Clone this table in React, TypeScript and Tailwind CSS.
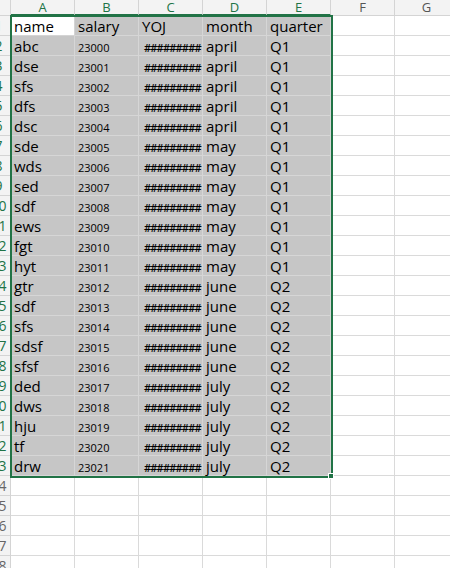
import React from "react";

const cols = ["A", "B", "C", "D", "E", "F", "G"];

const rows: [string, string, string, string][] = [
  ["abc", "23000", "april", "Q1"],
  ["dse", "23001", "april", "Q1"],
  ["sfs", "23002", "april", "Q1"],
  ["dfs", "23003", "april", "Q1"],
  ["dsc", "23004", "april", "Q1"],
  ["sde", "23005", "may", "Q1"],
  ["wds", "23006", "may", "Q1"],
  ["sed", "23007", "may", "Q1"],
  ["sdf", "23008", "may", "Q1"],
  ["ews", "23009", "may", "Q1"],
  ["fgt", "23010", "may", "Q1"],
  ["hyt", "23011", "may", "Q1"],
  ["gtr", "23012", "june", "Q2"],
  ["sdf", "23013", "june", "Q2"],
  ["sfs", "23014", "june", "Q2"],
  ["sdsf", "23015", "june", "Q2"],
  ["sfsf", "23016", "june", "Q2"],
  ["ded", "23017", "july", "Q2"],
  ["dws", "23018", "july", "Q2"],
  ["hju", "23019", "july", "Q2"],
  ["tf", "23020", "july", "Q2"],
  ["drw", "23021", "july", "Q2"],
];

const RowHead = ({ n, sel }: { n: number; sel: boolean }) => (
  <div
    className={`-ml-[13px] w-[24px] shrink-0 border-r border-b border-[#d4d4d4] bg-[#f3f3f3] flex items-end justify-center text-[14px] leading-[19px] ${
      sel ? "text-[#217346]" : "text-[#666]"
    }`}
  >
    {n}
  </div>
);

// selected cell (gray) vs plain cell
const Cell = ({
  children,
  sel,
  active,
}: {
  children?: React.ReactNode;
  sel?: boolean;
  active?: boolean;
}) => (
  <div
    className={`w-[64px] shrink-0 border-r border-b flex items-end whitespace-nowrap ${
      active ? "bg-white border-[#d4d4d4]" : sel ? "bg-[#c6c6c6] border-[#d6d6d6]" : "bg-white border-[#dadada]"
    }`}
  >
    {children}
  </div>
);

// relative so descenders paint over the next row's fill
const big = "relative text-[15px] leading-[18px] pl-[3px] text-black";
const small = "relative text-[11px] leading-[15px] pl-[3px] text-black";

export default function App() {
  return (
    <div
      className="relative w-[450px] h-[568px] overflow-hidden bg-white"
      style={{ fontFamily: '"Open Sans", "Noto Sans", sans-serif' }}
    >
      {/* column headers */}
      <div className="flex h-[16px]">
        <div className="-ml-[13px] w-[24px] shrink-0 border-r border-b border-[#d4d4d4] bg-[#f3f3f3]" />
        {cols.map((c, i) => (
          <div
            key={c}
            className={`w-[64px] shrink-0 border-r border-[#d4d4d4] bg-[#f3f3f3] flex items-center justify-center text-[13px] leading-none ${
              i < 5 ? "text-[#217346] border-b-2 border-b-[#217346]" : "text-[#555] border-b"
            }`}
          >
            {c}
          </div>
        ))}
      </div>

      {/* header row of data */}
      <div className="flex h-[20px]">
        <RowHead n={1} sel />
        <Cell active>
          <span className={big}>name</span>
        </Cell>
        <Cell sel>
          <span className={big}>salary</span>
        </Cell>
        <Cell sel>
          <span className={big}>YOJ</span>
        </Cell>
        <Cell sel>
          <span className={big}>month</span>
        </Cell>
        <Cell sel>
          <span className={big}>quarter</span>
        </Cell>
        <Cell />
        <Cell />
      </div>

      {rows.map((r, i) => (
        <div key={i} className="flex h-[20px]">
          <RowHead n={i + 2} sel />
          <Cell sel>
            <span className={big}>{r[0]}</span>
          </Cell>
          <Cell sel>
            <span className={small}>{r[1]}</span>
          </Cell>
          <Cell sel>
            <span className="relative text-[11px] leading-[15px] pl-[5px] text-black font-semibold tracking-[-0.8px]">#########</span>
          </Cell>
          <Cell sel>
            <span className={big}>{r[2]}</span>
          </Cell>
          <Cell sel>
            <span className={big}>{r[3]}</span>
          </Cell>
          <Cell />
          <Cell />
        </div>
      ))}

      {[24, 25, 26, 27, 28].map((n) => (
        <div key={n} className="flex h-[20px]">
          <RowHead n={n} sel={false} />
          {cols.map((c) => (
            <Cell key={c} />
          ))}
        </div>
      ))}

      {/* selection outline + fill handle */}
      <div className="absolute left-[10px] top-[15px] w-[323px] h-[463px] border-2 border-[#217346] pointer-events-none" />
      <div className="absolute left-[328px] top-[473px] w-[6px] h-[6px] bg-[#217346] border border-white" />
    </div>
  );
}
